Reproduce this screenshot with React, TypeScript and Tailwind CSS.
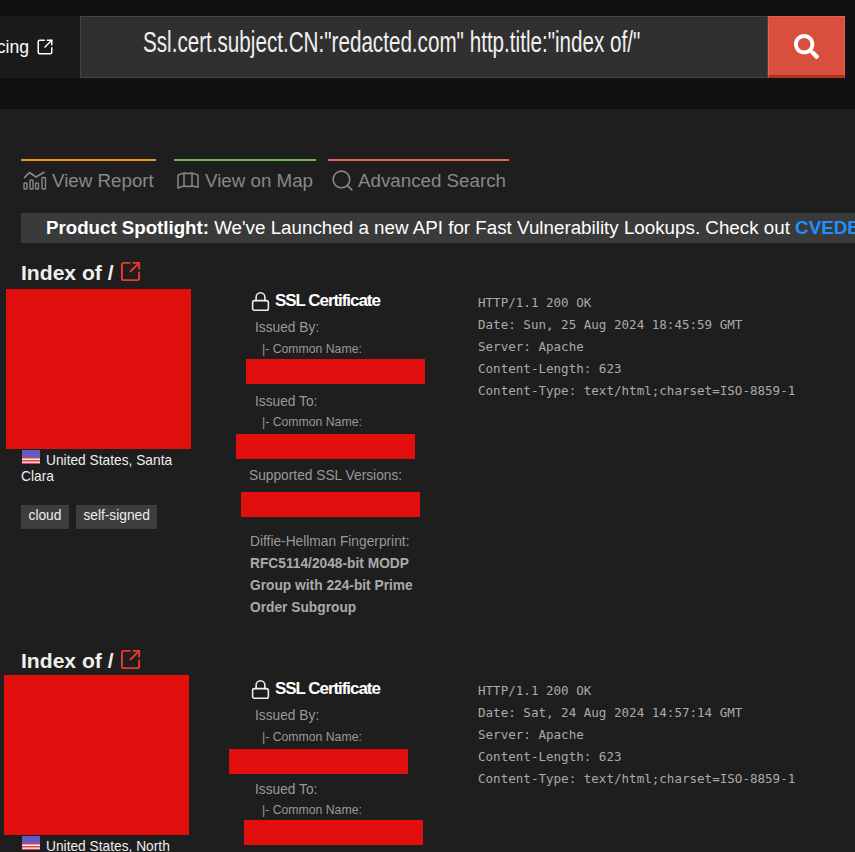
import { Lock, Search, SquareArrowOutUpRight } from 'lucide-react';
import { FaSearch } from 'react-icons/fa';

const sans = 'font-["Liberation_Sans",Arial,sans-serif]';

function ChartIcon() {
  return (
    <svg width="24" height="19" viewBox="0 0 24 19" fill="none" stroke="#888" strokeWidth="1.4" className="shrink-0">
      <rect x="1" y="12" width="3" height="6" rx="0.8" />
      <rect x="7" y="9" width="3" height="9" rx="0.8" />
      <rect x="12.5" y="12" width="3" height="6" rx="0.8" />
      <rect x="19" y="6.5" width="3.5" height="11.5" rx="0.8" />
      <path d="M1 7 L6.5 1.5 L13 6 L21.5 1" strokeWidth="1.7" />
    </svg>
  );
}

function MapFold() {
  return (
    <svg width="22" height="17" viewBox="0 0 22 17" fill="none" stroke="#888" strokeWidth="1.5" className="shrink-0">
      <path d="M1 3 L7 1 Q11 2 15 1 L21 3 V15 L15 14 Q11 15 7 14 L1 16 Z" />
      <path d="M7 1 V14 M15 1 V14" />
    </svg>
  );
}

function UsFlag() {
  return (
    <svg width="18" height="14" viewBox="0 0 18 14" className="shrink-0">
      <rect width="18" height="14" fill="#f3f3f3" />
      <rect y="7" width="18" height="1.5" fill="#d8404a" />
      <rect y="10" width="18" height="1.5" fill="#d8404a" />
      <rect y="12.8" width="18" height="1.2" fill="#d8404a" />
      <rect y="0" width="18" height="7" fill="#5c5cc4" />
    </svg>
  );
}

function Redacted({ className }: { className: string }) {
  return <div className={`bg-[#e20f0f] ${className}`} />;
}

function Tab({ className, icon, label }: { className: string; icon: React.ReactNode; label: string }) {
  return (
    <div className={`${className} border-t-2 pt-[7px] flex items-center text-[18.75px] leading-[23px] text-[#888] whitespace-nowrap`}>
      {icon}
      <span>{label}</span>
    </div>
  );
}

interface ResultProps {
  titleHeight: string;
  imgOffset: string;
  location: string;
  redA: string;
  redB: string;
  headers: string[];
  children?: React.ReactNode;
  left?: React.ReactNode;
  lockGap: string;
  headersTop: string;
}

function Result({ titleHeight, imgOffset, location, redA, redB, headers, children, left, lockGap, headersTop }: ResultProps) {
  return (
    <div className="pl-[21px]">
      <h2 className={`${titleHeight} flex items-center gap-[5px] text-[21.1px] font-bold text-[#eeeeee]`}>
        Index of /
        <SquareArrowOutUpRight size={23} color="#e8392f" strokeWidth={2} className="-mt-[3px]" />
      </h2>
      <div className="flex">
        <div className="w-[229px] shrink-0">
          <Redacted className={`w-[185px] h-[160px] ${imgOffset}`} />
          <div className="w-[170px] text-[13.75px] leading-[16px] text-[#eeeeee] mt-[4px]">
            <span className="inline-block align-top -mt-[3px] ml-[1px] mr-[6px]"><UsFlag /></span>
            {location}
          </div>
          {left}
        </div>
        <div className="w-[228px] shrink-0 text-[13.75px] text-[#999]">
          <div className={`flex items-center gap-[4px] h-[20px] ${lockGap}`}>
            <Lock size={21} color="#eeeeee" strokeWidth={1.8} />
            <span className="text-[17px] font-bold text-white tracking-[-1.05px]">SSL Certificate</span>
          </div>
          <div className="pl-[5px] mt-[7px] leading-[20px]">Issued By:</div>
          <div className="pl-[12px] mt-[3px] text-[12.25px] leading-[16px]">|- Common Name:</div>
          <Redacted className={`w-[179px] h-[25px] ${redA}`} />
          <div className="pl-[5px] leading-[20px]">Issued To:</div>
          <div className="pl-[12px] mt-[2px] text-[12.25px] leading-[16px]">|- Common Name:</div>
          <Redacted className={`w-[179px] h-[25px] ${redB}`} />
          {children}
        </div>
        <div className={`font-['DejaVu_Sans_Mono',monospace] text-[12.55px] leading-[22px] text-[#aaaaaa] ${headersTop} whitespace-nowrap`}>
          {headers.map((h) => (
            <div key={h}>{h}</div>
          ))}
        </div>
      </div>
    </div>
  );
}

export default function App() {
  return (
    <div className={`${sans} w-[855px] h-[852px] overflow-hidden bg-[#1e1e1e]`}>
      <header className="h-[109px] bg-[#111111] pt-[16px] flex">
        <div className="w-[80px] h-[62px] bg-[#1b1b1b] flex items-center justify-end gap-[7px] pr-[26px] text-[17.6px] text-white overflow-hidden shrink-0 whitespace-nowrap">
          <span>cing</span>
          <SquareArrowOutUpRight size={18} strokeWidth={2} className="shrink-0" />
        </div>
        <div className="w-[688px] h-[62px] bg-[#303030] border border-[#464646] pl-[62px] pt-[5px] text-[#f0f0f0] whitespace-nowrap overflow-hidden">
          <div className="text-[30px] leading-[40px] origin-left scale-x-[0.688] w-max">
            Ssl.cert.subject.CN:"redacted.com" http.title:"index of/"
          </div>
        </div>
        <div className="w-[77px] h-[62px] bg-[#d94f3d] border border-[#e2604e] border-b-[3px] border-b-[#b0301f] flex items-center justify-center text-white">
          <FaSearch size={25} />
        </div>
      </header>

      <main className="pt-[50px]">
        <div className="pl-[21px] flex">
          <Tab className="border-[#f7931a] w-[135px] mr-[18px] pl-[2px] gap-[5px]" icon={<ChartIcon />} label="View Report" />
          <Tab className="border-[#7ab648] w-[142px] mr-[12px] pl-[3px] gap-[6px]" icon={<MapFold />} label="View on Map" />
          <Tab className="border-[#e5645a] w-[181px] pl-[2px] gap-[3px]" icon={<Search size={25} strokeWidth={1.5} className="shrink-0" />} label="Advanced Search" />
        </div>

        <div className="ml-[21px] mt-[20px] h-[30px] bg-[#3a3a3a] pl-[25px] text-[18.8px] leading-[30px] text-white whitespace-nowrap">
          <b className="text-[18.7px]">Product Spotlight:</b> We've Launched a new API for Fast Vulnerability Lookups. Check out{' '}
          <b className="text-[#1e90ff]">CVEDB</b>
        </div>

        <div className="mt-[14px]">
          <Result
            titleHeight="h-[32px]"
            imgOffset="-ml-[15px]"
            location="United States, Santa Clara"
            redA="ml-[-4px] mt-[2px] mb-[8px]"
            redB="-ml-[14px] mt-[4px] mb-[7px]"
            lockGap="mt-[2px]"
            headersTop="pt-[3px]"
            headers={[
              'HTTP/1.1 200 OK',
              'Date: Sun, 25 Aug 2024 18:45:59 GMT',
              'Server: Apache',
              'Content-Length: 623',
              'Content-Type: text/html;charset=ISO-8859-1',
            ]}
            left={
              <div className="flex gap-[7px] mt-[20px] text-[13.75px] text-[#eeeeee]">
                <span className="bg-[#3d3d3d] h-[24px] px-[7.5px] leading-[21px]">cloud</span>
                <span className="bg-[#3d3d3d] h-[24px] px-[7.5px] leading-[21px]">self-signed</span>
              </div>
            }
          >
            <div className="leading-[20px] -ml-[1px] mt-[1px]">Supported SSL Versions:</div>
            <Redacted className="w-[179px] h-[25px] -ml-[9px] mt-[6px]" />
            <div className="leading-[22px] mt-[14px]">Diffie-Hellman Fingerprint:</div>
            <div className="leading-[22px] font-bold text-[#aaaaaa] w-[170px]">
              RFC5114/2048-bit MODP Group with 224-bit Prime Order Subgroup
            </div>
          </Result>
        </div>

        <div className="mt-[28px]">
          <Result
            titleHeight="h-[28px]"
            imgOffset="-ml-[17px]"
            location="United States, North"
            redA="-ml-[21px] mt-[4px] mb-[6px]"
            redB="-ml-[6px] mt-[2px]"
            lockGap="mt-[4px]"
            headersTop="pt-[5px]"
            headers={[
              'HTTP/1.1 200 OK',
              'Date: Sat, 24 Aug 2024 14:57:14 GMT',
              'Server: Apache',
              'Content-Length: 623',
              'Content-Type: text/html;charset=ISO-8859-1',
            ]}
          />
        </div>
      </main>
    </div>
  );
}
